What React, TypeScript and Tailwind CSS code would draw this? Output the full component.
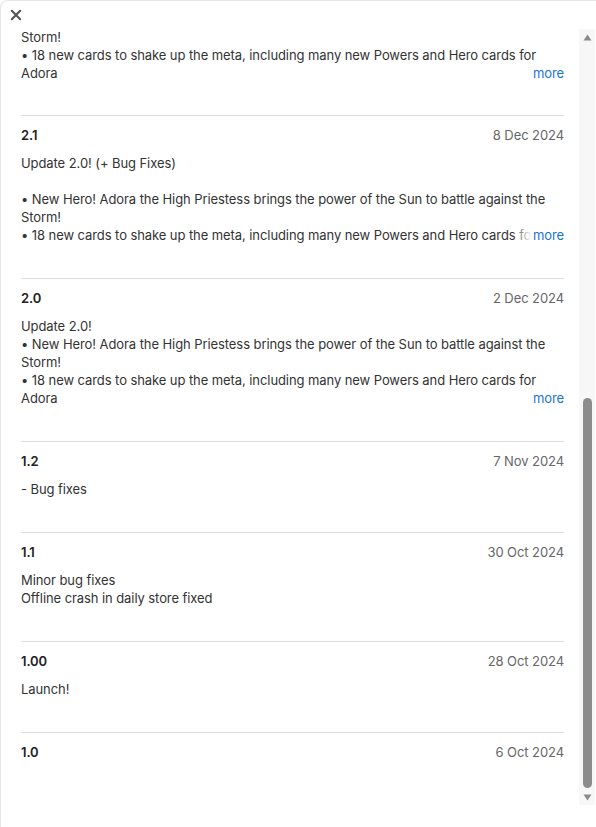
import React from "react";

type Entry = { ver?: string; date?: string; lines: string[]; more?: boolean };

const entries: Entry[] = [
  {
    ver: "2.1",
    date: "8 Dec 2024",
    lines: [
      "Update 2.0! (+ Bug Fixes)",
      "",
      "• New Hero! Adora the High Priestess brings the power of the Sun to battle against the",
      "Storm!",
      "• 18 new cards to shake up the meta, including many new Powers and Hero cards for Adora",
    ],
    more: true,
  },
  {
    ver: "2.0",
    date: "2 Dec 2024",
    lines: [
      "Update 2.0!",
      "• New Hero! Adora the High Priestess brings the power of the Sun to battle against the",
      "Storm!",
      "• 18 new cards to shake up the meta, including many new Powers and Hero cards for",
      "Adora",
    ],
    more: true,
  },
  { ver: "1.2", date: "7 Nov 2024", lines: ["- Bug fixes"] },
  { ver: "1.1", date: "30 Oct 2024", lines: ["Minor bug fixes", "Offline crash in daily store fixed"] },
  { ver: "1.00", date: "28 Oct 2024", lines: ["Launch!"] },
  { ver: "1.0", date: "6 Oct 2024", lines: [] },
];

function Body({ lines, more }: { lines: string[]; more?: boolean }) {
  return (
    <div className="flex flex-col">
      {lines.map((l, i) => {
        const last = i === lines.length - 1;
        if (last && more) {
          return (
            <div key={i} className="relative h-[18px] overflow-hidden whitespace-nowrap">
              {l}
              <span className="absolute right-0 top-0 flex h-[18px] items-center">
                <span className="h-[18px] w-[20px] bg-gradient-to-r from-white/0 to-white" />
                <span className="bg-white pl-[1px] text-[#1a73d4]">more</span>
              </span>
            </div>
          );
        }
        return (
          <div key={i} className="h-[18px] whitespace-nowrap">
            {l}
          </div>
        );
      })}
    </div>
  );
}

export default function App() {
  return (
    <div
      className="flex h-[827px] w-[596px] overflow-hidden rounded-tl-[8px] border-l border-t border-[#e6e6e6] bg-white text-[13px] leading-[18px] tracking-[-0.08px] text-[#333]"
      style={{ fontFamily: "Inter, 'Noto Sans', sans-serif" }}
    >
      <div className="flex min-w-0 flex-1 flex-col">
        <div className="h-[27px] pl-[9px] pt-[8px]">
          <svg width="12" height="12" viewBox="0 0 12 12">
            <path d="M1.8 1.8 L10.2 10.2 M10.2 1.8 L1.8 10.2" stroke="#555" strokeWidth="2.1" strokeLinecap="round" />
          </svg>
        </div>
        <div className="flex flex-col pl-[20px] pr-[15px]">
          <div className="pb-[33px]">
            <Body
              lines={[
                "Storm!",
                "• 18 new cards to shake up the meta, including many new Powers and Hero cards for",
                "Adora",
              ]}
              more
            />
          </div>
          {entries.map((e, i) => (
            <div key={i} className="flex flex-col border-t border-[#dcdcdc] pb-[34px] pt-[10px]">
              <div className="flex h-[18px] items-center justify-between">
                <span className="font-semibold text-[#222]">{e.ver}</span>
                <span className="text-[#666]">{e.date}</span>
              </div>
              {e.lines.length > 0 && (
                <div className="pt-[10px]">
                  <Body lines={e.lines} more={e.more} />
                </div>
              )}
            </div>
          ))}
        </div>
      </div>
      <div className="flex w-[17px] flex-col pt-[28px] pr-[1px]">
        <div className="flex h-[776px] flex-col items-center bg-[#f7f7f7]">
          <div className="flex h-[16px] items-center justify-center">
            <svg width="9" height="7" viewBox="0 0 9 7">
              <path d="M4.5 0.5 L8.5 6.5 L0.5 6.5 Z" fill="#8a8a8a" />
            </svg>
          </div>
          <div className="flex w-full flex-1 flex-col items-center pt-[353px] pb-[1px]">
            <div className="w-[9px] flex-1 rounded-full bg-[#8c8c8c]" />
          </div>
          <div className="flex h-[16px] items-center justify-center">
            <svg width="9" height="7" viewBox="0 0 9 7">
              <path d="M0.5 0.5 L8.5 0.5 L4.5 6.5 Z" fill="#8a8a8a" />
            </svg>
          </div>
        </div>
      </div>
    </div>
  );
}
